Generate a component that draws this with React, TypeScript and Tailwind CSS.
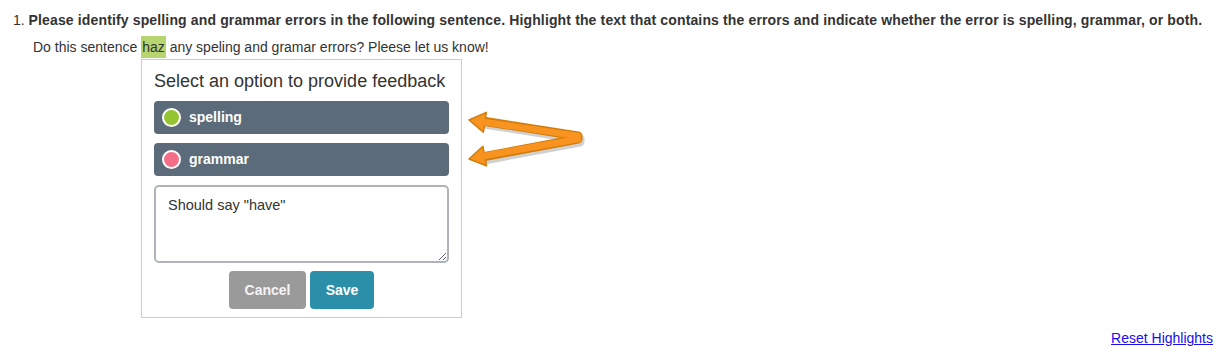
import React from "react";

function Arrows() {
  return (
    <svg className="absolute left-[460px] top-[100px]" width="130" height="80" viewBox="0 0 130 80">
      <g opacity="0.18" transform="translate(2,3)">
        <line x1="118" y1="36" x2="22" y2="21" stroke="#000" strokeWidth="9" strokeLinecap="round" />
        <line x1="118" y1="39" x2="22" y2="57" stroke="#000" strokeWidth="9" strokeLinecap="round" />
      </g>
      <line x1="118" y1="36" x2="22" y2="21" stroke="#d27c08" strokeWidth="9" strokeLinecap="round" />
      <line x1="118" y1="39" x2="22" y2="57" stroke="#d27c08" strokeWidth="9" strokeLinecap="round" />
      <polygon points="9,20 26.3,12.4 23.4,32.2" fill="#f7931e" stroke="#d27c08" strokeWidth="1.5" strokeLinejoin="round" />
      <polygon points="9,59 22.9,46.3 26.5,65.9" fill="#f7931e" stroke="#d27c08" strokeWidth="1.5" strokeLinejoin="round" />
      <line x1="118" y1="36" x2="24" y2="22" stroke="#f7931e" strokeWidth="6.5" strokeLinecap="round" />
      <line x1="118" y1="39" x2="24" y2="56" stroke="#f7931e" strokeWidth="6.5" strokeLinecap="round" />
    </svg>
  );
}

function Option({ label, color }: { label: string; color: string }) {
  return (
    <div className="h-[33px] rounded-[4px] bg-[#5c6b7a] flex items-center pl-[8px] gap-[8px]">
      <span className={`w-[19px] h-[19px] rounded-full border-2 border-white ${color}`} />
      <span className="text-white font-bold text-[14px]">{label}</span>
    </div>
  );
}

export default function App() {
  return (
    <div className="relative h-[356px] w-full bg-white text-[14px] text-[#333] font-['Liberation_Sans',Helvetica,Arial,sans-serif]">
      <div className="pt-[10px] pl-[13px] leading-[20px] whitespace-nowrap">
        1.{" "}
        <b className="tracking-[0.14px]">
          Please identify spelling and grammar errors in the following sentence. Highlight the text that contains the
          errors and indicate whether the error is spelling, grammar, or both.
        </b>
      </div>
      <div className="mt-[6px] pl-[33px] leading-[22px] whitespace-nowrap">
        Do this sentence <span className="inline-block bg-[#b6d56f] px-[1px]">haz</span> any speling and gramar errors?
        Pleese let us know!
      </div>

      <div className="ml-[141px] mt-[1px] w-[321px] border border-[#cccccc] px-[12px] pt-[10px] pb-[8px] bg-white">
        <div className="text-[18px] leading-[22px] text-[#333] whitespace-nowrap">Select an option to provide feedback</div>
        <div className="mt-[9px] flex flex-col gap-[9px]">
          <Option label="spelling" color="bg-[#94c42f]" />
          <Option label="grammar" color="bg-[#f46e88]" />
        </div>
        <textarea
          className="mt-[9px] block w-full h-[78px] resize-y rounded-[5px] border-2 border-[#aeb4ba] px-[12px] pt-[8px] text-[14.5px] leading-[20px] text-[#333] outline-none"
          defaultValue={'Should say "have"'}
        />
        <div className="mt-[8px] flex justify-center gap-[4px]">
          <button className="w-[77px] h-[38px] rounded-[4px] bg-[#9a9a9a] text-[#f4f4f4] text-[14px] font-bold">Cancel</button>
          <button className="w-[64px] h-[38px] rounded-[4px] bg-[#2b8fa9] text-white text-[14px] font-bold">Save</button>
        </div>
      </div>

      <div className="mt-[10px] flex justify-end pr-[16px]">
        <a href="#" className="text-[14px] text-[#1a0dee] underline">
          Reset Highlights
        </a>
      </div>

      <Arrows />
    </div>
  );
}
